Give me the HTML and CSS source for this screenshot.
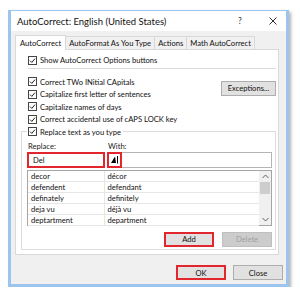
FILE: index.html
```html
<!DOCTYPE html>
<html lang="en">
<head>
    <meta charset="UTF-8">
    <meta name="viewport" content="width=device-width, initial-scale=1.0">
    <title>AutoCorrect</title>
    <link rel="stylesheet" href="styles.css">
</head>
<body>

<div class="dialog">
    <div class="titlebar">
        <span class="title">AutoCorrect: English (United States)</span>
        <span class="help">?</span>
        <span class="close">
            <svg width="8" height="8" viewBox="0 0 8 8"><path d="M0.5 0.5L7.5 7.5M7.5 0.5L0.5 7.5" stroke="#333" stroke-width="1" fill="none"/></svg>
        </span>
    </div>

    <div class="client">
        <div class="tabs">
            <div class="tab active">AutoCorrect</div>
            <div class="tab">AutoFormat As You Type</div>
            <div class="tab">Actions</div>
            <div class="tab">Math AutoCorrect</div>
        </div>

        <div class="panel">
            <div class="check">
                <svg class="box" viewBox="0 0 9 9"><rect x="0.5" y="0.5" width="8" height="8" fill="#fff" stroke="#444"/><path d="M2 4.6L3.8 6.4L7 2.6" stroke="#222" fill="none"/></svg>
                Show AutoCorrect Options buttons
            </div>
            <div class="separator"></div>

            <div class="options">
                <div class="checks">
                    <div class="check">
                        <svg class="box" viewBox="0 0 9 9"><rect x="0.5" y="0.5" width="8" height="8" fill="#fff" stroke="#444"/><path d="M2 4.6L3.8 6.4L7 2.6" stroke="#222" fill="none"/></svg>
                        Correct TWo INitial CApitals
                    </div>
                    <div class="check">
                        <svg class="box" viewBox="0 0 9 9"><rect x="0.5" y="0.5" width="8" height="8" fill="#fff" stroke="#444"/><path d="M2 4.6L3.8 6.4L7 2.6" stroke="#222" fill="none"/></svg>
                        Capitalize first letter of sentences
                    </div>
                    <div class="check">
                        <svg class="box" viewBox="0 0 9 9"><rect x="0.5" y="0.5" width="8" height="8" fill="#fff" stroke="#444"/><path d="M2 4.6L3.8 6.4L7 2.6" stroke="#222" fill="none"/></svg>
                        Capitalize names of days
                    </div>
                    <div class="check">
                        <svg class="box" viewBox="0 0 9 9"><rect x="0.5" y="0.5" width="8" height="8" fill="#fff" stroke="#444"/><path d="M2 4.6L3.8 6.4L7 2.6" stroke="#222" fill="none"/></svg>
                        Correct accidental use of cAPS LOCK key
                    </div>
                </div>
                <button class="btn exceptions">Exceptions...</button>
            </div>

            <fieldset class="group">
                <legend class="check">
                    <svg class="box" viewBox="0 0 9 9"><rect x="0.5" y="0.5" width="8" height="8" fill="#fff" stroke="#444"/><path d="M2 4.6L3.8 6.4L7 2.6" stroke="#222" fill="none"/></svg>
                    Replace text as you type
                </legend>

                <div class="fields">
                    <div class="field replace">
                        <span class="label">Replace:</span>
                        <div class="input marked">Del</div>
                    </div>
                    <div class="field with">
                        <span class="label">With:</span>
                        <div class="input">
                            <span class="symbol">
                                <svg width="9" height="9" viewBox="0 0 9 9"><path d="M1 8L5 1.5L6 8Z" fill="#000"/><path d="M7.5 1V8.5" stroke="#000" stroke-width="1"/></svg>
                            </span>
                        </div>
                    </div>
                </div>

                <div class="list">
                    <table class="entries">
                        <tr><td>decor</td><td>décor</td></tr>
                        <tr><td>defendent</td><td>defendant</td></tr>
                        <tr><td>definately</td><td>definitely</td></tr>
                        <tr><td>deja vu</td><td>déjà vu</td></tr>
                        <tr><td>deptartment</td><td>department</td></tr>
                    </table>
                    <div class="scrollbar">
                        <svg width="7" height="5" viewBox="0 0 7 5"><path d="M0.5 4L3.5 1L6.5 4" stroke="#606060" fill="none"/></svg>
                        <div class="track"><div class="thumb"></div></div>
                        <svg width="7" height="5" viewBox="0 0 7 5"><path d="M0.5 1L3.5 4L6.5 1" stroke="#606060" fill="none"/></svg>
                    </div>
                </div>

                <div class="actions">
                    <button class="btn marked">Add</button>
                    <button class="btn" disabled>Delete</button>
                </div>
            </fieldset>
        </div>

        <div class="footer">
            <button class="btn marked">OK</button>
            <button class="btn">Close</button>
        </div>
    </div>
</div>

</body>
</html>
```

FILE: styles.css
```css
body {
    margin: 0;
    background-color: white;
    font-family: "Lato", "Noto Sans", sans-serif;
    font-size: 7.6px;
    color: #111;
}

.dialog {
    box-sizing: border-box;
    width: 281px;
    height: 277px;
    margin: 10px 0 0 8px;
    border: 3px solid #9cc5ee;
    border-top-width: 1px;
    box-shadow: 2px 2px 3px rgba(0, 0, 0, 0.3);
    display: flex;
    flex-direction: column;
}

.titlebar {
    height: 20px;
    background-color: white;
    display: flex;
    align-items: center;
    padding-left: 6px;
}

.title {
    font-size: 9.5px;
}

.help {
    margin-left: auto;
    width: 10px;
    text-align: center;
    font-size: 8.5px;
    color: #333;
}

.close {
    width: 26px;
    margin-left: 15px;
    display: flex;
    justify-content: center;
}

.client {
    flex: 1;
    background-color: #f0f0f0;
    padding: 5px 7px 0 4px;
    display: flex;
    flex-direction: column;
}

.tabs {
    display: flex;
    height: 13px;
}

.tab {
    padding: 0 3px;
    display: flex;
    align-items: center;
    border: 1px solid #d9d9d9;
    border-bottom: none;
    margin-left: -1px;
    background-color: #f0f0f0;
}

.tab:first-child {
    margin-left: 0;
}

.tab.active {
    background-color: white;
    margin-top: -1px;
    margin-bottom: -1px;
    position: relative;
    z-index: 1;
    padding: 0 4px;
}

.panel {
    box-sizing: border-box;
    height: 206px;
    background-color: white;
    border: 1px solid #d9d9d9;
    padding: 4px 2px 0 5px;
}

.check {
    display: flex;
    align-items: center;
    height: 12.5px;
    padding-left: 7px;
    white-space: nowrap;
}

.box {
    width: 9px;
    height: 9px;
    margin-right: 3px;
    flex-shrink: 0;
}

.separator {
    height: 1px;
    background-color: #dadada;
    margin: 1px 0 7px 7px;
}

.options {
    display: flex;
    justify-content: space-between;
    align-items: flex-start;
}

.checks {
    display: flex;
    flex-direction: column;
}

.btn {
    box-sizing: border-box;
    height: 15px;
    padding: 0;
    font-family: inherit;
    font-size: 7.6px;
    color: #111;
    background-color: #e1e1e1;
    border: 1px solid #adadad;
}

.btn:disabled {
    color: #a0a0a0;
    background-color: #cccccc;
    border-color: #bfbfbf;
}

.btn.marked {
    border: 2px solid #e2262d;
}

.exceptions {
    width: 55px;
    margin-top: 5px;
}

.group {
    margin: 0;
    border: 1px solid #dcdcdc;
    padding: 0 3px 2px 5px;
    min-width: 0;
}

.group legend.check {
    padding: 0 2px 0 1px;
    height: 12px;
}

.fields {
    display: flex;
    gap: 2px;
    margin-top: 3px;
}

.field {
    display: flex;
    flex-direction: column;
}

.replace {
    width: 78px;
}

.with {
    flex: 1;
}

.label {
    height: 10px;
    line-height: 10px;
    margin-left: 1px;
    color: #222;
}

.input {
    box-sizing: border-box;
    height: 16px;
    margin-top: 1px;
    border: 1px solid #b4b4b4;
    background-color: white;
    display: flex;
    align-items: center;
    padding-left: 4px;
}

.input.marked {
    border: 2px solid #e2262d;
}

.with .input {
    padding-left: 0;
    border-left: none;
}

.symbol {
    box-sizing: border-box;
    width: 15px;
    height: 16px;
    border: 2px solid #e2262d;
    display: flex;
    align-items: center;
    justify-content: center;
}

.list {
    display: flex;
    height: 56px;
    margin-top: 2px;
    border: 1px solid #a5a5a5;
    box-sizing: border-box;
}

.entries {
    flex: 1;
    border-collapse: collapse;
    align-self: flex-start;
}

.entries td {
    height: 11px;
    padding: 0 0 0 3px;
    border-bottom: 1px solid #e6e6e6;
    line-height: 10px;
    box-sizing: border-box;
}

.entries td:first-child {
    width: 76px;
    border-right: 1px solid #e6e6e6;
}

.scrollbar {
    width: 12px;
    background-color: #f0f0f0;
    display: flex;
    flex-direction: column;
    align-items: center;
    padding: 3px 0;
    box-sizing: border-box;
}

.track {
    flex: 1;
    width: 100%;
    padding: 3px 1px;
    box-sizing: border-box;
}

.thumb {
    height: 12px;
    background-color: #cdcdcd;
}

.actions {
    display: flex;
    justify-content: flex-end;
    gap: 8px;
    margin-top: 6px;
}

.actions .btn {
    width: 50px;
}

.footer {
    display: flex;
    justify-content: flex-end;
    gap: 7px;
    margin: 10px -4px 0 0;
}

.footer .btn {
    width: 50px;
}
```
